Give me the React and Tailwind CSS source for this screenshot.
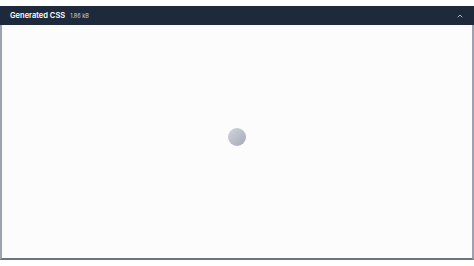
import { ChevronUp } from "lucide-react";

const App = () => {
  return (
    <div className="w-[474px] h-[266px] bg-white pt-[6px] px-0 font-['Inter',sans-serif]">
      <div className="flex flex-col h-[254px] border-x-2 border-b-2 border-[#6b7280] border-x-[#9ca3af]">
        <div className="flex items-center justify-between h-[19px] bg-[#1e293b] pl-[10px] pr-[10px] -mx-[2px]">
          <div className="flex items-baseline gap-[5px]">
            <span className="text-white text-[7.5px] font-semibold">Generated CSS</span>
            <span className="text-[#cbd5e1] text-[5.5px]">1.86 kB</span>
          </div>
          <ChevronUp className="w-[8px] h-[8px] text-[#cbd5e1]" strokeWidth={2.5} />
        </div>
        <div className="flex-1 flex items-center justify-center bg-[#fcfcfd]">
          <div className="w-[18px] h-[18px] rounded-full bg-gradient-to-br from-[#d1d5db] to-[#a5a9b8] -mt-[10px]" />
        </div>
      </div>
    </div>
  );
};

export default App;
